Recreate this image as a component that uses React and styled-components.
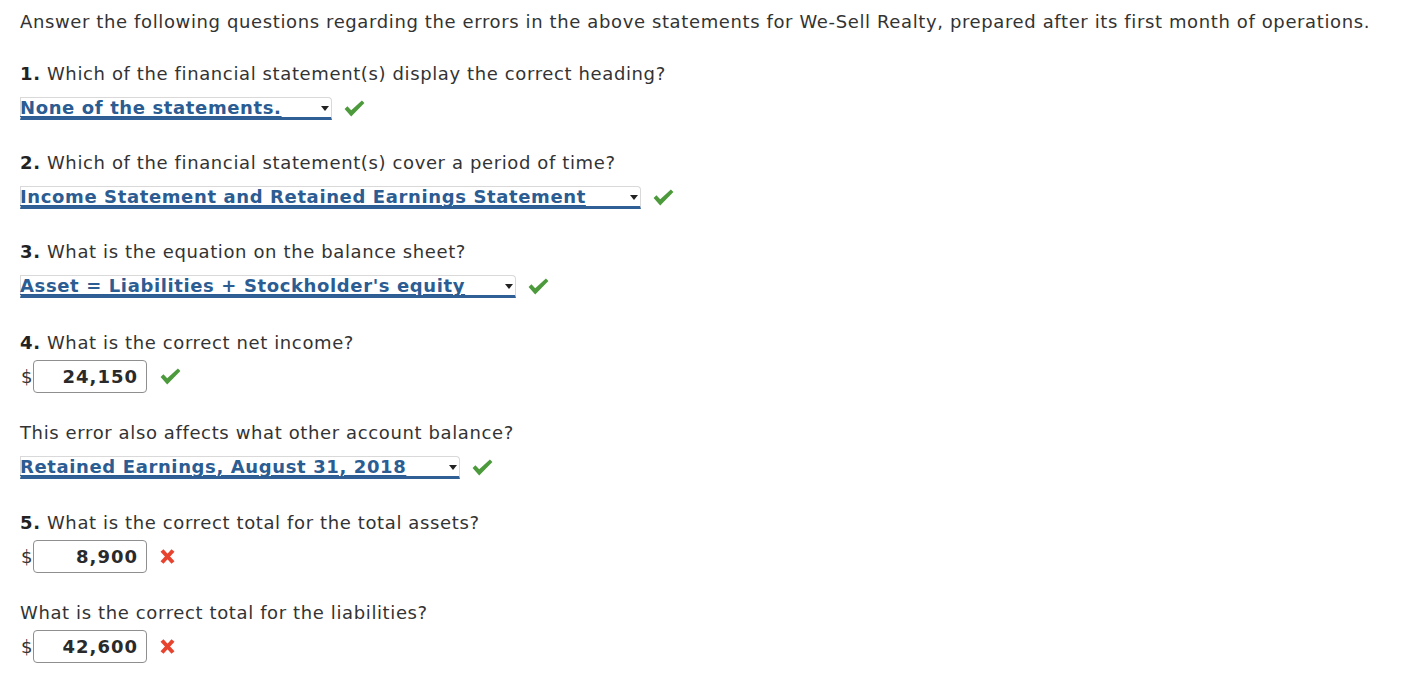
import React from "react";
import styled, { createGlobalStyle } from "styled-components";

const Global = createGlobalStyle`
  html, body { margin: 0; padding: 0; background: #fff; }
  body { font-family: "DejaVu Sans", Verdana, sans-serif; color: #333; }
`;

const Page = styled.div`
  padding: 11px 20px 0 20px;
  font-size: 18px;
  letter-spacing: 0.62px;
`;

const Intro = styled.p`
  margin: 0 0 30px 0;
  line-height: 22px;
  white-space: nowrap;
`;

const Block = styled.div`
  display: flex;
  flex-direction: column;
  align-items: flex-start;
  margin-bottom: ${(p) => p.$gap || 32}px;
`;

const Question = styled.div`
  line-height: 22px;
  margin-bottom: ${(p) => p.$mb || 12}px;
  white-space: nowrap;
  b { color: #222; }
`;

const AnswerRow = styled.div`
  display: flex;
  align-items: center;
  gap: 12px;
`;

const SelectBox = styled.div`
  box-sizing: border-box;
  width: ${(p) => p.$w}px;
  height: 23px;
  display: flex;
  align-items: center;
  justify-content: space-between;
  border: 1px solid #d9d9d9;
  border-bottom: 3px solid #2f5f94;
  border-radius: 0 4px 0 0;
  background: #fff;
  padding-right: 2px;
`;

const SelectText = styled.span`
  font-weight: bold;
  color: #2b5c92;
  text-decoration: underline;
  text-underline-offset: 2px;
  font-size: 18px;
  letter-spacing: 0.62px;
  line-height: 19px;
  white-space: nowrap;
  margin-left: -1px;
`;

const Arrow = styled.span`
  width: 0;
  height: 0;
  border-left: 4.5px solid transparent;
  border-right: 4.5px solid transparent;
  border-top: 5px solid #222;
  margin-top: 1px;
`;

const InputRow = styled.div`
  display: flex;
  align-items: center;
`;

const Dollar = styled.span`
  width: 12px;
  margin-left: 1px;
  letter-spacing: 0;
`;

const NumberBox = styled.div`
  box-sizing: border-box;
  width: 114px;
  height: 33px;
  border: 1px solid #8f8f8f;
  border-radius: 4px;
  display: flex;
  align-items: center;
  justify-content: flex-end;
  padding-right: 8px;
  font-weight: bold;
  font-size: 18px;
  letter-spacing: 1px;
  color: #2a2a2a;
  margin-right: 13px;
`;

const Check = () => (
  <svg width="21" height="17" viewBox="0 0 21 17">
    <path d="M0.6 9 L3.4 6.2 L7.2 10.2 L17.9 0.4 L20.4 3 L7.2 16.4 Z" fill="#4c9a3b" />
  </svg>
);

const Cross = () => (
  <svg width="15" height="15" viewBox="0 0 15 15">
    <path d="M2 1.5 L13 13.5 M13 1.5 L2 13.5" fill="none" stroke="#e8432f" strokeWidth="4" strokeLinecap="butt" />
  </svg>
);

const Select = ({ w, text }) => (
  <AnswerRow>
    <SelectBox $w={w}>
      <SelectText>{text}</SelectText>
      <Arrow />
    </SelectBox>
    <Check />
  </AnswerRow>
);

const Amount = ({ value, ok }) => (
  <InputRow>
    <Dollar>$</Dollar>
    <NumberBox>{value}</NumberBox>
    {ok ? <Check /> : <Cross />}
  </InputRow>
);

export default function App() {
  return (
    <>
      <Global />
      <Page>
        <Intro>
          Answer the following questions regarding the errors in the above statements for We-Sell Realty, prepared after its first month of operations.
        </Intro>
        <Block>
          <Question><b>1.</b> Which of the financial statement(s) display the correct heading?</Question>
          <Select w={312} text="None of the statements." />
        </Block>
        <Block>
          <Question><b>2.</b> Which of the financial statement(s) cover a period of time?</Question>
          <Select w={621} text="Income Statement and Retained Earnings Statement" />
        </Block>
        <Block $gap={34}>
          <Question><b>3.</b> What is the equation on the balance sheet?</Question>
          <Select w={496} text="Asset = Liabilities + Stockholder's equity" />
        </Block>
        <Block $gap={29}>
          <Question $mb={6}><b>4.</b> What is the correct net income?</Question>
          <Amount value="24,150" ok />
        </Block>
        <Block $gap={33}>
          <Question>This error also affects what other account balance?</Question>
          <Select w={440} text="Retained Earnings, August 31, 2018" />
        </Block>
        <Block $gap={29}>
          <Question $mb={6}><b>5.</b> What is the correct total for the total assets?</Question>
          <Amount value="8,900" />
        </Block>
        <Block>
          <Question $mb={6}>What is the correct total for the liabilities?</Question>
          <Amount value="42,600" />
        </Block>
      </Page>
    </>
  );
}
